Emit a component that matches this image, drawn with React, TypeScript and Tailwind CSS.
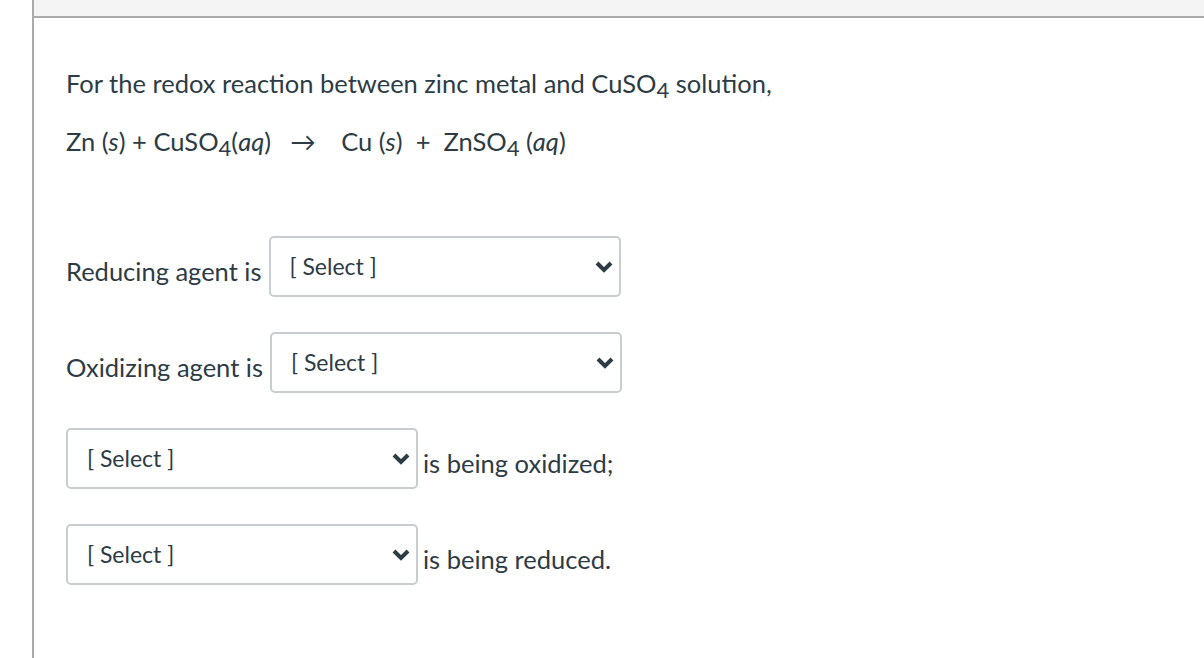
import React from "react";

const Chevron = () => (
  <svg width="20" height="14" viewBox="0 0 20 14" className="block">
    <path d="M3 3 L10 10 L17 3" fill="none" stroke="#2d3b45" strokeWidth="4" strokeLinecap="butt" strokeLinejoin="miter" />
  </svg>
);

const Select = ({ w = "w-[352px]" }: { w?: string }) => (
  <div className={`${w} h-[61px] border-2 border-[#c7cdd1] rounded-[5px] bg-white flex items-center justify-between pl-[19px] pr-[5px] shrink-0`}>
    <span className="text-[23px] text-[#2d3b45] -mt-[2px]">[ Select ]</span>
    <Chevron />
  </div>
);

const Sub = () => (
  <span className="relative top-[5px] text-[22px]">4</span>
);

export default function App() {
  return (
    <div className="w-[1204px] h-[658px] bg-white flex overflow-hidden" style={{ fontFamily: "Lato, 'Open Sans', sans-serif" }}>
      <div className="w-[32px] shrink-0" />
      <div className="flex-1 border-l-2 border-[#aaaaaa] flex flex-col">
        <div className="h-[18px] bg-[#f4f4f4] border-b-2 border-[#aaaaaa] shrink-0" />
        <div className="pl-[32px] text-[#2d3b45] text-[25.5px] leading-[30px]">
          <div className="mt-[50px]">
            For the redox reaction between zinc metal and CuSO<Sub /> solution,
          </div>
          <div className="mt-[26px] whitespace-pre">
            Zn (<i>s</i>) + CuSO<Sub />(<i>aq</i>)  <span className="inline-block mx-[6px]">→</span>   Cu (<i>s</i>)  +  ZnSO<Sub /> (<i>aq</i>)
          </div>
          <div className="mt-[78px] flex items-center">
            <span className="mr-[7px] mt-[8px]">Reducing agent is</span>
            <Select />
          </div>
          <div className="mt-[35px] flex items-center">
            <span className="mr-[7px] mt-[8px]">Oxidizing agent is</span>
            <Select />
          </div>
          <div className="mt-[35px] flex items-center">
            <Select />
            <span className="ml-[5px] mt-[8px]">is being oxidized;</span>
          </div>
          <div className="mt-[35px] flex items-center">
            <Select />
            <span className="ml-[5px] mt-[8px]">is being reduced.</span>
          </div>
        </div>
      </div>
    </div>
  );
}
